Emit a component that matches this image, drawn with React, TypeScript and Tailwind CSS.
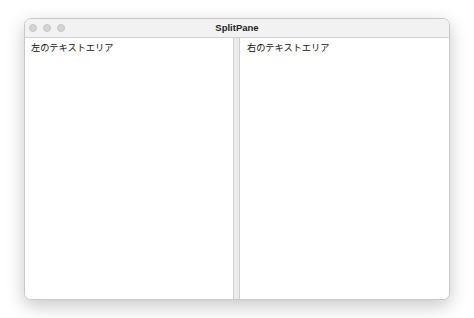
import React from "react";

export default function App() {
  return (
    <div className="w-[474px] h-[318px] bg-white pt-[18px] pl-[24px]" style={{ fontFamily: '"Liberation Sans", "Noto Sans CJK JP", sans-serif' }}>
      <div className="w-[426px] h-[282px] rounded-[7px] border border-[#c9c9c9] bg-white shadow-[0_6px_18px_rgba(0,0,0,0.22)] overflow-hidden flex flex-col">
        <div className="h-[19px] bg-[#f2f2f2] border-b border-[#d2d2d2] flex items-center relative shrink-0">
          <div className="flex gap-[6px] pl-[4px]">
            <span className="w-[8px] h-[8px] rounded-full bg-[#d4d4d4] border border-[#c6c6c6]" />
            <span className="w-[8px] h-[8px] rounded-full bg-[#d4d4d4] border border-[#c6c6c6]" />
            <span className="w-[8px] h-[8px] rounded-full bg-[#d4d4d4] border border-[#c6c6c6]" />
          </div>
          <div className="absolute inset-0 flex items-center justify-center text-[9.5px] font-bold text-[#1f1f1f]">SplitPane</div>
        </div>
        <div className="flex-1 flex">
          <div className="w-[209px] bg-white border-r border-[#cfcfcf] pl-[6px] pt-[4px] text-[9.2px] text-[#111111] leading-[12px]">
            左のテキストエリア
          </div>
          <div className="w-[5px] bg-[#ebebeb]" />
          <div className="flex-1 bg-white border-l border-[#cfcfcf] pl-[7px] pt-[4px] text-[9.2px] text-[#111111] leading-[12px]">
            右のテキストエリア
          </div>
        </div>
      </div>
    </div>
  );
}
